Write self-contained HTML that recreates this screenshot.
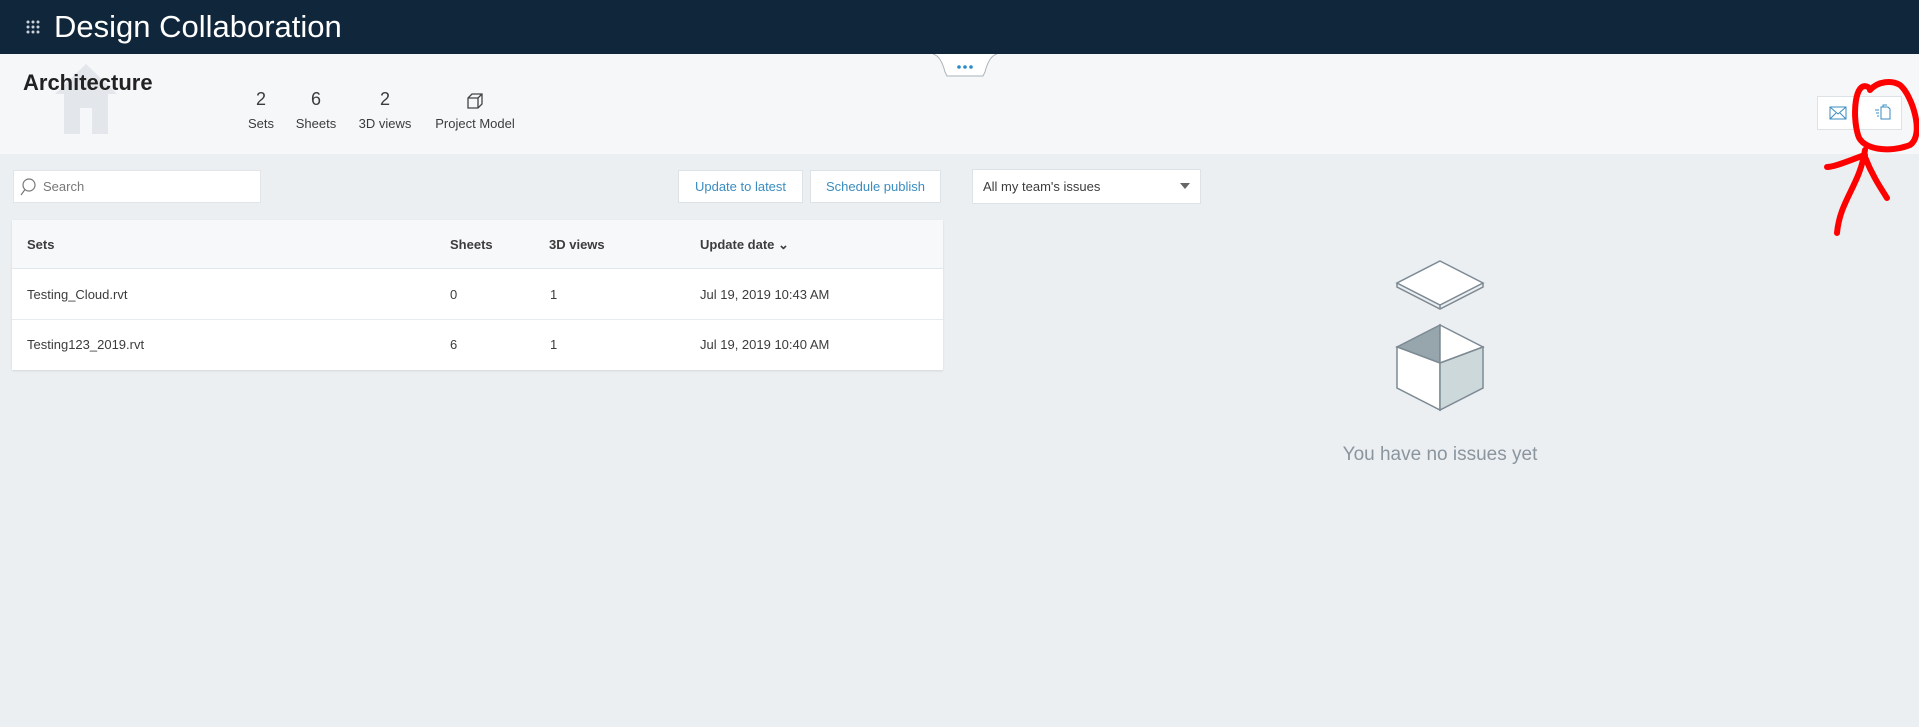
<!DOCTYPE html>
<html><head><meta charset="utf-8"><style>
*{margin:0;padding:0;box-sizing:border-box}
body{width:1919px;height:727px;overflow:hidden;background:#eceff2;font-family:"Liberation Sans",sans-serif;position:relative;color:#3c3c3c}
.a{position:absolute}
.hdr{left:0;top:0;width:1919px;height:54px;background:#10263b}
.sub{left:0;top:54px;width:1919px;height:100px;background:#f5f7f9}
.box{background:#fff;border:1px solid #dde2e6}
.btn{color:#3a8dc0;font-size:13px;display:flex;align-items:center;justify-content:center}
.th{font-size:13px;font-weight:bold;color:#3c3c3c}
.td{font-size:13px;color:#3c3c3c}
</style></head><body>
<div class="a hdr"></div>
<svg class="a" style="left:26px;top:20px" width="16" height="16"><g fill="#c9d2da">
<circle cx="2" cy="2" r="1.5"/><circle cx="7" cy="2" r="1.5"/><circle cx="12" cy="2" r="1.5"/>
<circle cx="2" cy="7" r="1.5"/><circle cx="7" cy="7" r="1.5"/><circle cx="12" cy="7" r="1.5"/>
<circle cx="2" cy="12" r="1.5"/><circle cx="7" cy="12" r="1.5"/><circle cx="12" cy="12" r="1.5"/></g></svg>
<div class="a" style="left:54px;top:7px;font-size:31px;color:#fff;line-height:40px">Design Collaboration</div>
<div class="a sub"></div>
<svg class="a" style="left:933px;top:54px" width="64" height="24"><path d="M0 0 Q8 2 12 18 L14 22 L50 22 L52 18 Q56 2 64 0" fill="#fff" stroke="#aab3bb" stroke-width="1"/><g fill="#2a8bc5"><circle cx="26" cy="13" r="1.8"/><circle cx="32" cy="13" r="1.8"/><circle cx="38" cy="13" r="1.8"/></g></svg>
<svg class="a" style="left:55px;top:64px" width="62" height="70"><path d="M31 0 L62 30 L53 30 L53 70 L37 70 L37 44 L25 44 L25 70 L9 70 L9 30 L0 30Z" fill="#e3e6ea"/></svg>
<div class="a" style="left:23px;top:70px;font-size:22px;font-weight:bold;color:#222">Architecture</div>
<div class="a" style="left:241px;top:89px;width:40px;text-align:center;font-size:18px">2</div>
<div class="a" style="left:296px;top:89px;width:40px;text-align:center;font-size:18px">6</div>
<div class="a" style="left:365px;top:89px;width:40px;text-align:center;font-size:18px">2</div>
<svg class="a" style="left:466px;top:92px" width="18" height="18" fill="none" stroke="#444" stroke-width="1.3"><path d="M2 6 L6 2 L16 2 L16 12 L12 16 L2 16Z M2 6 L12 6 L12 16 M12 6 L16 2"/></svg>
<div class="a" style="left:236px;top:116px;width:50px;text-align:center;font-size:13px">Sets</div>
<div class="a" style="left:286px;top:116px;width:60px;text-align:center;font-size:13px">Sheets</div>
<div class="a" style="left:350px;top:116px;width:70px;text-align:center;font-size:13px">3D views</div>
<div class="a" style="left:425px;top:116px;width:100px;text-align:center;font-size:13px">Project Model</div>
<div class="a box" style="left:1817px;top:96px;width:85px;height:34px"></div>
<svg class="a" style="left:1829px;top:105px" width="18" height="16" fill="none" stroke="#3a8dc0" stroke-width="1"><rect x="1" y="2" width="16" height="12"/><path d="M1 2 L9 9 L17 2 M1 14 L7 8 M17 14 L11 8"/></svg>
<svg class="a" style="left:1874px;top:104px" width="18" height="18" fill="none" stroke="#3a8dc0" stroke-width="1"><path d="M7 3 L14 3 L16 5 L16 15 L7 15Z M9 3 L9 1 L13 1 M1 6 L5 6 M2 9 L5 9 M3 12 L5 12"/></svg>
<div class="a box" style="left:13px;top:170px;width:248px;height:33px;border-color:#e1e5e8"></div>
<svg class="a" style="left:20px;top:178px" width="18" height="18" fill="none" stroke="#777" stroke-width="1.2"><circle cx="9" cy="7" r="6"/><path d="M5 11.5 L1 17"/></svg>
<div class="a" style="left:43px;top:179px;font-size:13px;color:#777">Search</div>
<div class="a box btn" style="left:678px;top:170px;width:125px;height:33px">Update to latest</div>
<div class="a box btn" style="left:810px;top:170px;width:131px;height:33px">Schedule publish</div>
<div class="a box" style="left:972px;top:169px;width:229px;height:35px"></div>
<div class="a" style="left:983px;top:179px;font-size:13px">All my team's issues</div>
<svg class="a" style="left:1180px;top:183px" width="10" height="7"><path d="M0 0 L10 0 L5 6Z" fill="#666"/></svg>
<div class="a" style="left:12px;top:220px;width:931px;height:150px;background:#fff;box-shadow:0 1px 2px rgba(0,0,0,.1)"></div>
<div class="a" style="left:12px;top:220px;width:931px;height:49px;background:#f7f8fa;border-bottom:1px solid #e3e6e9"></div>
<div class="a" style="left:12px;top:319px;width:931px;height:1px;background:#e8ebee"></div>
<div class="a th" style="left:27px;top:237px">Sets</div>
<div class="a th" style="left:450px;top:237px">Sheets</div>
<div class="a th" style="left:549px;top:237px">3D views</div>
<div class="a th" style="left:700px;top:237px">Update date &#8964;</div>
<div class="a td" style="left:27px;top:287px">Testing_Cloud.rvt</div>
<div class="a td" style="left:450px;top:287px">0</div>
<div class="a td" style="left:550px;top:287px">1</div>
<div class="a td" style="left:700px;top:287px">Jul 19, 2019 10:43 AM</div>
<div class="a td" style="left:27px;top:337px">Testing123_2019.rvt</div>
<div class="a td" style="left:450px;top:337px">6</div>
<div class="a td" style="left:550px;top:337px">1</div>
<div class="a td" style="left:700px;top:337px">Jul 19, 2019 10:40 AM</div>
<svg class="a" style="left:1390px;top:255px" width="100" height="160" fill="none" stroke="#7d8a93" stroke-width="1.5">
<path d="M50 6 L93 28 L50 50 L7 28Z" fill="#fff"/><path d="M7 28 L7 32 L50 54 L93 32 L93 28 M50 50 L50 54"/>
<path d="M50 70 L7 92 L50 108Z" fill="#97a5ad"/><path d="M50 70 L93 92 L50 108Z" fill="#fff"/>
<path d="M7 92 L50 108 L50 155 L7 133Z" fill="#fff"/><path d="M93 92 L50 108 L50 155 L93 133Z" fill="#ccd8da"/></svg>
<div class="a" style="left:1290px;top:444px;width:300px;text-align:center;font-size:19px;color:#8a959e">You have no issues yet</div>
<svg class="a" style="left:1800px;top:75px" width="119" height="170" fill="none" stroke="#f00" stroke-width="6" stroke-linecap="round">
<path d="M68 12 C55 5 52 40 58 60 C62 75 90 78 110 70 C125 60 112 20 100 10 C92 5 78 6 70 15"/>
<path d="M65 75 C60 110 40 125 37 158"/><path d="M65 80 C50 85 35 92 27 92"/><path d="M65 82 C72 100 80 112 87 123"/></svg>
</body></html>
